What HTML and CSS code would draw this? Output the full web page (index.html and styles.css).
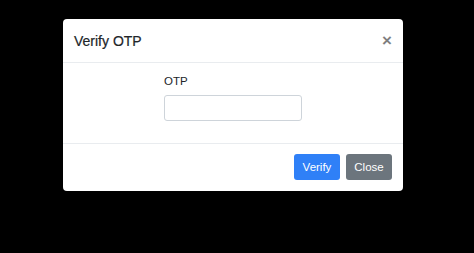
FILE: index.html
```html
<!DOCTYPE html>
<html>
<head>
<meta charset="utf-8">
<link rel="stylesheet" href="styles.css">
</head>
<body>
<div class="modal">
  <div class="modal-header">
    <h5 class="modal-title">Verify OTP</h5>
    <button class="close" type="button">&times;</button>
  </div>
  <div class="modal-body">
    <div class="form-group">
      <label class="label">OTP</label>
      <input class="input" type="text">
    </div>
  </div>
  <div class="modal-footer">
    <button class="btn btn-primary" type="button">Verify</button>
    <button class="btn btn-secondary" type="button">Close</button>
  </div>
</div>
</body>
</html>
```

FILE: styles.css
```css
html, body {
  margin: 0;
  padding: 0;
  background: #000;
  height: 100%;
}
body {
  font-family: "Liberation Sans", Arial, Helvetica, sans-serif;
  color: #212529;
  padding-top: 19px;
  box-sizing: border-box;
}
.modal {
  margin-left: 63px;
  width: 340px;
  background: #fff;
  border-radius: 4px;
  overflow: hidden;
}
.modal-header {
  height: 44px;
  box-sizing: border-box;
  padding: 0 11px;
  display: flex;
  align-items: center;
  justify-content: space-between;
  border-bottom: 1px solid #e9ecef;
}
.modal-title {
  margin: 0;
  font-size: 14px;
  font-weight: 500;
  line-height: 20px;
  padding-top: 1px;
  -webkit-text-stroke: 0.2px #212529;
}
.close {
  border: 0;
  background: transparent;
  padding: 0;
  font-family: "Liberation Sans", Arial, sans-serif;
  font-size: 17px;
  font-weight: 700;
  line-height: 1;
  color: #000;
  opacity: 0.5;
  margin-top: -1px;
}
.modal-body {
  height: 80px;
  box-sizing: border-box;
  padding: 10px 0 0 101px;
}
.form-group {
  display: flex;
  flex-direction: column;
}
.label {
  font-size: 11.5px;
  line-height: 17px;
  margin-bottom: 5px;
}
.input {
  width: 138px;
  height: 26px;
  box-sizing: border-box;
  border: 1px solid #ced4da;
  border-radius: 3px;
  margin: 0;
  padding: 0 6px;
  background: #fff;
}
.modal-footer {
  border-top: 1px solid #e9ecef;
  height: 48px;
  box-sizing: border-box;
  padding: 0 11px 1px 0;
  display: flex;
  align-items: center;
  justify-content: flex-end;
  gap: 6px;
}
.btn {
  height: 26px;
  width: 46px;
  border: 0;
  border-radius: 3px;
  padding: 0;
  color: #fff;
  font-family: "Liberation Sans", Arial, sans-serif;
  font-size: 11.5px;
  line-height: 26px;
}
.btn-primary {
  background: #2f80f7;
}
.btn-secondary {
  background: #6c757d;
}
```
